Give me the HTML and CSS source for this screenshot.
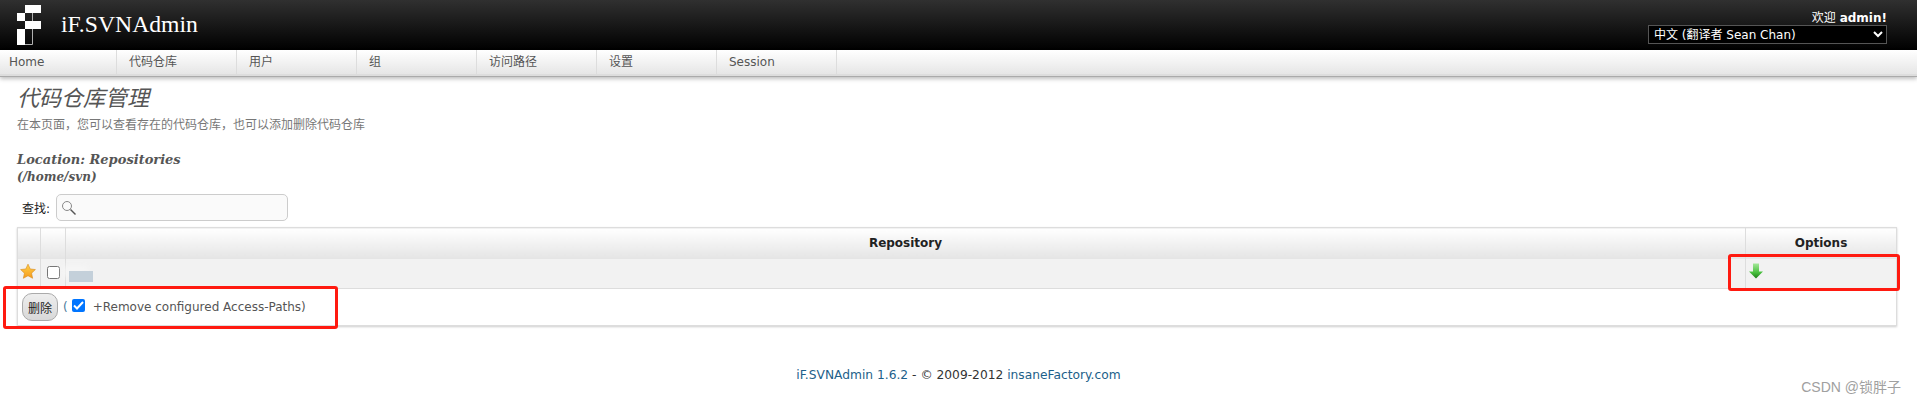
FILE: index.html
```html
<!DOCTYPE html>
<html lang="zh">
<head>
<meta charset="utf-8">
<title>iF.SVNAdmin</title>
<link rel="stylesheet" href="styles.css">
</head>
<body>
<header class="top">
  <div class="brand">
    <svg class="logo" width="24" height="40" viewBox="0 0 24 40"><path fill="#fff" d="M8 0h16v8H8zM0 8h8v8H0zM8 16h16v8H8zM0 24h8v16H0z"/><path fill="none" stroke="#b0b0b0" d="M15.500 8v8M15.500 24v15.500H8"/></svg>
    <span class="brand-name">iF.SVNAdmin</span>
  </div>
  <div class="session">
    <div class="welcome">欢迎 <b>admin!</b></div>
    <select class="lang"><option>中文 (翻译者 Sean Chan)</option></select>
  </div>
</header>
<nav class="nav">
  <a>Home</a><a>代码仓库</a><a>用户</a><a>组</a><a>访问路径</a><a>设置</a><a>Session</a>
</nav>
<main class="content">
  <h1>代码仓库管理</h1>
  <p class="desc">在本页面，您可以查看存在的代码仓库，也可以添加删除代码仓库</p>
  <h2>Location: Repositories<br><small>(/home/svn)</small></h2>
  <div class="search">
    <label>查找:</label>
    <div class="search-box">
      <svg width="16" height="16" viewBox="0 0 16 16"><circle cx="6" cy="6" r="4.500" fill="none" stroke="#888"/><path d="M9.500 9.500l5 5" stroke="#555" stroke-width="1.400"/></svg>
    </div>
  </div>
  <table class="grid">
    <thead>
      <tr><th class="c1"></th><th class="c2"></th><th>Repository</th><th class="c4">Options</th></tr>
    </thead>
    <tbody>
      <tr class="row">
        <td class="c1"><svg width="16" height="16" viewBox="0 0 18 17"><defs><linearGradient id="st" x1="0" y1="0" x2="0" y2="1"><stop offset="0" stop-color="#ffd24a"/><stop offset="1" stop-color="#f59a1c"/></linearGradient></defs><path fill="url(#st)" stroke="#d98c20" stroke-width=".7" d="M9 .8l2.500 5.400 5.800.7-4.300 4 1.200 5.800L9 13.800l-5.200 2.900 1.200-5.800-4.300-4 5.800-.7z"/></svg></td>
        <td class="c2"><span class="box"></span></td>
        <td><span class="blur"></span></td>
        <td class="c4"><svg width="14" height="16" viewBox="0 0 14 15"><defs><linearGradient id="ar" x1="0" y1="0" x2="0" y2="1"><stop offset="0" stop-color="#a5e89a"/><stop offset=".6" stop-color="#49c03f"/><stop offset="1" stop-color="#1c7d18"/></linearGradient></defs><path fill="url(#ar)" d="M4 0h6v8h4l-7 7-7-7h4z"/></svg></td>
      </tr>
      <tr>
        <td colspan="4" class="actions">
          <div class="action-row">
            <button class="del" type="button">删除</button>
            <span class="paren">(</span>
            <span class="check"><svg width="11" height="9" viewBox="0 0 11 9"><path d="M1 4.500l3 3 6-6.500" fill="none" stroke="#fff" stroke-width="2"/></svg></span>
            <span class="opt">+Remove configured Access-Paths)</span>
          </div>
        </td>
      </tr>
    </tbody>
  </table>
</main>
<footer class="foot"><a>iF.SVNAdmin 1.6.2</a> - © 2009-2012 <a>insaneFactory.com</a></footer>
<div class="mark mark-opt"></div>
<div class="mark mark-del"></div>
<div class="watermark">CSDN @锁胖子</div>
</body>
</html>
```
FILE: styles.css
```css
* { box-sizing: border-box; }
html, body { margin: 0; height: 404px; overflow: hidden; background: #fff; }
body { font: 12px "DejaVu Sans", "Noto Sans CJK SC", sans-serif; color: #555; position: relative; }
.top { height: 50px; display: flex; justify-content: space-between; background: linear-gradient(#303030, #000); }
.brand { display: flex; align-items: flex-start; padding: 5px 0 0 17px; }
.logo { display: block; }
.brand-name { margin-left: 20px; margin-top: 6px; font: 23.700px "Liberation Serif", serif; color: #fff; }
.session { width: 240px; margin-right: 30px; padding-top: 12px; text-align: right; }
.welcome { color: #fff; font-size: 12px; line-height: 13px; }
.lang { display: block; width: 239px; height: 19px; margin-left: 1px; padding: 0 0 0 1px; background: #000; color: #fff; border: 1px solid #555; font: 12px "DejaVu Sans", "Noto Sans CJK SC", sans-serif; border-radius: 0; }
.nav { display: flex; height: 26px; background: linear-gradient(#fff, #e6e6e6); box-shadow: 0 1px 0 #aaa, 0 3px 4px rgba(0,0,0,.25); border-bottom: 2px solid #ddd; }
.nav a { width: 120px; padding: 4px 0 0 12px; font-size: 12px; line-height: 16px; color: #555; border-right: 1px solid #ddd; }
.nav a:first-child { width: 117px; padding-left: 9px; }
.content { padding: 9px 20px 0 17px; }
h1 { margin: 0; font: italic 400 22px/27px "Liberation Serif", "Noto Sans CJK SC", serif; color: #555; }
.desc { margin: 6px 0 0; font-size: 12px; line-height: 15px; color: #777; }
h2 { margin: 18px 0 0; font: italic 700 13px/17px "DejaVu Serif", serif; color: #555; }
h2 small { font-size: 12px; }
.search { display: flex; align-items: center; margin-top: 8px; height: 27px; padding-left: 5px; }
.search label { width: 34px; color: #222; font-size: 12px; }
.search-box { width: 232px; height: 27px; padding: 5px 0 0 4px; background: #fafafa; border: 1px solid #ccc; border-radius: 5px; }
.search-box svg { display: block; }
.grid { width: 1880px; margin-top: 6px; border-collapse: collapse; table-layout: fixed; box-shadow: 0 1px 2px rgba(0,0,0,.2); border: 1px solid #ddd; }
.grid th { height: 31px; padding: 0; font-size: 12px; color: #222; background: linear-gradient(#fff, #e4e4e4); border-right: 1px solid #ddd; }
.grid .c1 { width: 23px; }
.grid .c2 { width: 25px; }
.grid .c4 { width: 151px; }
.row td { height: 30px; padding: 0; background: #f2f2f2; border: 1px solid #ddd; border-width: 0 1px 1px 0; vertical-align: top; }
.row .c1 svg { display: block; margin: 4px 0 0 2px; }
.box { display: block; width: 13px; height: 13px; margin: 7px 0 0 6px; background: #fff; border: 1px solid #767676; border-radius: 2.500px; }
.row .c4 svg { display: block; margin: 4px 0 0 3px; }
.blur { display: block; width: 24px; height: 11px; margin: 12px 0 0 3px; background: #c4d0da; box-shadow: -6px -5px 6px #f6f6f6; filter: blur(.5px); }
.actions { height: 37px; padding: 0 0 0 4px; }
.action-row { display: flex; align-items: center; font-size: 12px; }
.del { flex: none; width: 36px; height: 28px; padding: 0; background: linear-gradient(#eee, #d8d8d8); color: #222; border: 1px solid #aaa; border-radius: 10px; font: 12px "Noto Sans CJK SC", sans-serif; }
.paren { margin-left: 5px; color: #4a7a9a; }
.check { display: flex; flex: none; align-items: center; justify-content: center; width: 13px; height: 13px; margin: -3px 0 0 4px; background: #0075ff; border-radius: 2px; }
.opt { margin-left: 8px; white-space: nowrap; color: #555; }
.foot { margin-top: 41px; text-align: center; font-size: 12.250px; line-height: 16px; color: #333; }
.foot a { color: #1d5f8a; }
.mark { position: absolute; border: 3px solid #ff1a10; border-radius: 3px; }
.mark-opt { left: 1728px; top: 254px; width: 172px; height: 37px; }
.mark-del { left: 3px; top: 286px; width: 335px; height: 43px; }
.watermark { position: absolute; right: 16px; top: 376px; font: 14px "Liberation Sans", "Noto Sans CJK SC", sans-serif; color: #a0a0a0; }
```
